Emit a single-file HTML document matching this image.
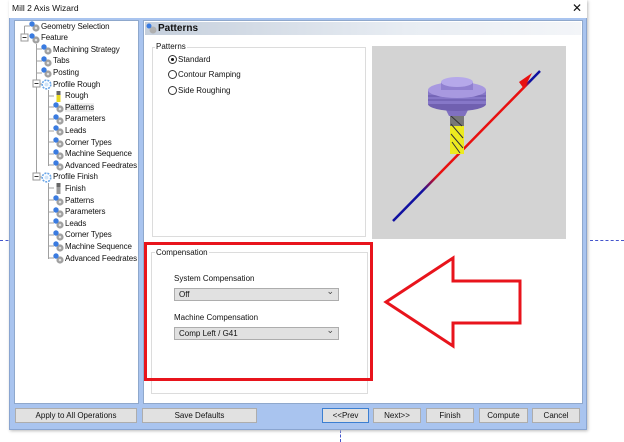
<!DOCTYPE html>
<html><head><meta charset="utf-8"><style>
*{margin:0;padding:0;box-sizing:border-box}
body{width:624px;height:442px;background:#fff;position:relative;overflow:hidden;font-family:"Liberation Sans",sans-serif;font-size:8.5px;color:#111}
.a{position:absolute}
.win{left:9px;top:0;width:578px;height:430px;background:#a9c4ef;border:1px solid #8aa5d0;box-shadow:1px 1px 3px #bbb}
.title{left:9px;top:0;width:578px;height:18px;background:#fff}
.tree{left:14px;top:20px;width:125px;height:384px;background:#fff;border:1px solid #8fa8cc}
.right{left:143px;top:20px;width:440px;height:384px;background:#fff;border:1px solid #8fa8cc}
.hdr{left:145px;top:22px;width:436px;height:13px;background:linear-gradient(90deg,#c5cfdc,#e8edf3 60%,#f3f5f8)}
.grp{border:1px solid #dcdcdc}
.lbl{background:#fff;padding:0 1px}
.radio{width:9px;height:9px;border:1px solid #333;border-radius:50%;background:#fff}
.combo{background:#e1e1e1;border:1px solid #adadad;height:13px;padding:1px 4px;font-size:8px}
.combo:after{content:"\2304";position:absolute;right:4px;top:-3px;font-size:9px;color:#444}
.btn{top:408px;height:15px;background:#e1e1e1;border:1px solid #adadad;text-align:center;line-height:13px;font-size:8px}
.ti{font-size:8px;white-space:nowrap;letter-spacing:-0.1px}
.ic{width:11px;height:11px}
</style></head><body>
<div class="a" style="left:0;top:240px;width:14px;border-top:1px dashed #4455cc"></div>
<div class="a" style="left:590px;top:240px;width:34px;border-top:1px dashed #4455cc"></div>
<div class="a" style="left:340px;top:430px;height:12px;border-left:1px dashed #4455cc"></div>
<div class="a win"></div>
<div class="a title"></div>
<div class="a" style="left:12px;top:3px;font-size:8.5px">Mill 2 Axis Wizard</div>
<div class="a" style="left:572px;top:1px;font-size:12px">✕</div>
<div class="a tree"></div>
<div class="a right"></div>
<div class="a hdr"></div>
<svg class="a" style="left:146px;top:23px" width="11" height="11"><circle cx="7" cy="7" r="3.5" fill="#b0b0b0"/><circle cx="3" cy="3" r="2.5" fill="#3a7be0"/></svg>
<div class="a" style="left:158px;top:23px;font-weight:bold;font-size:10px">Patterns</div>

<svg class="a" style="left:14px;top:20px" width="125" height="250">
<g stroke="#a0a0a0" stroke-width="1" fill="none">
<path d="M10.5 6V18M10.5 6H16M22.5 24V89M22.5 29H28M22.5 41H28M22.5 53H28M22.5 64H28M22.5 157H28M34.5 70V146M34.5 76H40M34.5 87H40M34.5 99H40M34.5 111H40M34.5 122H40M34.5 134H40M34.5 145H40M22.5 89V157M34.5 163V239M34.5 168H40M34.5 180H40M34.5 192H40M34.5 203H40M34.5 215H40M34.5 226H40M34.5 238H40"/>
</g>
<rect x="7" y="14" width="7" height="7" fill="#fff" stroke="#999"/><path d="M8.5 17.5H12.5" stroke="#333"/>
<rect x="19" y="60" width="7" height="7" fill="#fff" stroke="#999"/><path d="M20.5 63.5H24.5" stroke="#333"/>
<rect x="19" y="153" width="7" height="7" fill="#fff" stroke="#999"/><path d="M20.5 156.5H24.5" stroke="#333"/>
</svg>
<div class="a" id="treeitems"></div>
<script>
var items=[[0,"Geometry Selection","g"],[0,"Feature","g"],[1,"Machining Strategy","g"],[1,"Tabs","g"],[1,"Posting","g"],[1,"Profile Rough","s"],[2,"Rough","y"],[2,"Patterns","g"],[2,"Parameters","g"],[2,"Leads","g"],[2,"Corner Types","g"],[2,"Machine Sequence","g"],[2,"Advanced Feedrates","g"],[1,"Profile Finish","s"],[2,"Finish","k"],[2,"Patterns","g"],[2,"Parameters","g"],[2,"Leads","g"],[2,"Corner Types","g"],[2,"Machine Sequence","g"],[2,"Advanced Feedrates","g"]];
var h="";
items.forEach(function(it,i){var y=21+i*11.6;var tx=41+it[0]*12;var ix=tx-12;
var ic;
if(it[2]=="g")ic='<circle cx="7" cy="7" r="3.6" fill="#a0a0a0"/><circle cx="7" cy="7" r="1.3" fill="#e0e0e0"/><circle cx="3" cy="3" r="2.7" fill="#3a7be0"/>';
else if(it[2]=="s")ic='<circle cx="5.5" cy="5.5" r="4.3" fill="none" stroke="#6aa6e8" stroke-width="1.6" stroke-dasharray="2 1"/><circle cx="5.5" cy="5.5" r="2" fill="#cfe3f8"/>';
else if(it[2]=="y")ic='<rect x="3.5" y="0" width="4" height="11" fill="#666"/><rect x="3.5" y="4" width="4" height="7" fill="#e8d820"/>';
else ic='<rect x="3.5" y="0" width="4" height="11" fill="#666"/><rect x="3.5" y="4" width="4" height="7" fill="#999"/>';
h+='<svg class="a ic" style="left:'+ix+'px;top:'+y+'px" viewBox="0 0 11 11">'+ic+'</svg>';
h+='<div class="a ti" style="left:'+tx+'px;top:'+(y+0.5)+'px'+(i==7?';background:#eee':'')+'">'+it[1]+'</div>';});
document.getElementById("treeitems").innerHTML=h;
</script>

<div class="a grp" style="left:152px;top:47px;width:214px;height:190px"></div>
<div class="a lbl" style="left:155px;top:42px;font-size:8px">Patterns</div>
<div class="a radio" style="left:168px;top:55px"></div><div class="a" style="left:171px;top:58px;width:3px;height:3px;background:#111;border-radius:50%"></div>
<div class="a" style="left:178px;top:55px;font-size:8px">Standard</div>
<div class="a radio" style="left:168px;top:70px"></div><div class="a" style="left:178px;top:70px;font-size:8px">Contour Ramping</div>
<div class="a radio" style="left:168px;top:86px"></div><div class="a" style="left:178px;top:86px;font-size:8px">Side Roughing</div>

<div class="a" style="left:372px;top:46px;width:194px;height:193px;background:#d3d3d3"></div>
<svg class="a" style="left:372px;top:46px" width="194" height="193">
<defs><linearGradient id="l" x1="21" y1="175" x2="168" y2="25" gradientUnits="userSpaceOnUse"><stop offset="0" stop-color="#1010a0"/><stop offset="0.2" stop-color="#1010a0"/><stop offset="0.3" stop-color="#e81010"/><stop offset="0.9" stop-color="#e81010"/><stop offset="0.93" stop-color="#1010a0"/></linearGradient></defs>
<line x1="21" y1="175" x2="168" y2="25" stroke="url(#l)" stroke-width="2.5"/>
<path d="M160 27L152 43L147 36Z" fill="#e81010"/>
<rect x="78" y="68" width="14" height="40" fill="#777"/>
<rect x="78" y="80" width="14" height="28" fill="#ecea20"/>
<path d="M79 70L90 80M79 78L91 92M79 88L91 102M80 96L88 107" stroke="#333" stroke-width="1"/>
<path d="M72 60L98 60L93 70L77 70Z" fill="#8070c0"/>
<ellipse cx="85" cy="58" rx="29" ry="7" fill="#7060b0"/>
<rect x="56" y="44" width="58" height="14" fill="#8677c8"/>
<path d="M56 50H114M56 54H114" stroke="#5a4a9a" stroke-width="0.8"/>
<ellipse cx="85" cy="44" rx="29" ry="8" fill="#a899e0"/>
<rect x="69" y="36" width="32" height="8" fill="#9080d0"/>
<ellipse cx="85" cy="36" rx="16" ry="5" fill="#b5a8ea"/>
</svg>

<div class="a grp" style="left:151px;top:252px;width:217px;height:142px"></div>
<div class="a lbl" style="left:155px;top:248px;font-size:8px">Compensation</div>
<div class="a" style="left:174px;top:274px;font-size:8px">System Compensation</div>
<div class="a combo" style="left:174px;top:288px;width:165px">Off</div>
<div class="a" style="left:174px;top:313px;font-size:8px">Machine Compensation</div>
<div class="a combo" style="left:174px;top:327px;width:165px">Comp Left / G41</div>
<div class="a" style="left:144px;top:242px;width:229px;height:139px;border:3px solid #e8141c"></div>
<svg class="a" style="left:380px;top:252px" width="146" height="100"><path d="M6 50L73 6V29H140V71H73V94Z" fill="none" stroke="#e8141c" stroke-width="3"/></svg>

<div class="a btn" style="left:15px;width:122px">Apply to All Operations</div>
<div class="a btn" style="left:142px;width:115px">Save Defaults</div>
<div class="a btn" style="left:322px;width:47px;border-color:#3c7fd1">&lt;&lt;Prev</div>
<div class="a btn" style="left:373px;width:48px">Next&gt;&gt;</div>
<div class="a btn" style="left:426px;width:48px">Finish</div>
<div class="a btn" style="left:479px;width:49px">Compute</div>
<div class="a btn" style="left:532px;width:48px">Cancel</div>
</body></html>
